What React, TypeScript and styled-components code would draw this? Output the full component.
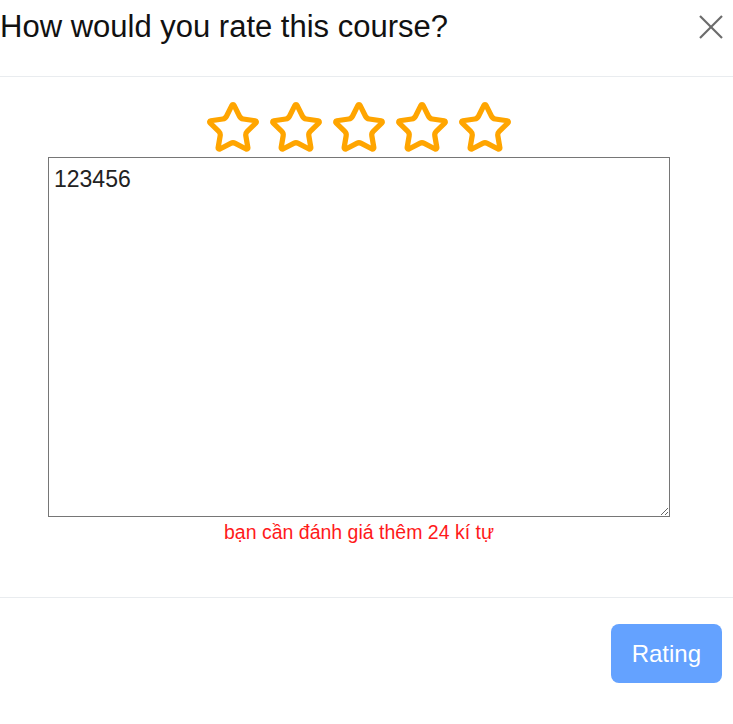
import React, { useState } from "react";
import styled, { createGlobalStyle } from "styled-components";

const GlobalStyle = createGlobalStyle`
  html, body {
    margin: 0;
    padding: 0;
    background: #ffffff;
    font-family: "Liberation Sans", Arial, sans-serif;
  }
  * { box-sizing: border-box; }
`;

const Modal = styled.div`
  width: 733px;
  height: 724px;
  background: #ffffff;
  display: flex;
  flex-direction: column;
`;

const Header = styled.div`
  height: 77px;
  border-bottom: 1px solid #e9ecef;
  display: flex;
  align-items: flex-start;
  justify-content: space-between;
  padding: 9px 10px 0 0;
`;

const Title = styled.h2`
  margin: 0;
  font-size: 31px;
  font-weight: 400;
  line-height: 36px;
  color: #111;
  font-family: "Liberation Sans", Arial, sans-serif;
`;

const CloseButton = styled.button`
  border: none;
  background: transparent;
  padding: 0;
  margin-top: 6px;
  width: 24px;
  height: 24px;
  cursor: pointer;
  svg { display: block; }
`;

const Body = styled.div`
  padding: 23px 63px 53px 48px;
  display: flex;
  flex-direction: column;
  align-items: center;
  border-bottom: 1px solid #e9ecef;
`;

const Stars = styled.div`
  display: flex;
  gap: 7px;
  height: 56px;
  margin-bottom: 1px;
`;

const StarButton = styled.span`
  display: block;
  cursor: pointer;
  svg { display: block; }
`;

const TextArea = styled.textarea`
  display: block;
  width: 622px;
  height: 360px;
  border: 1px solid #767676;
  border-radius: 0;
  padding: 8px 5px;
  font-family: "Liberation Sans", Arial, sans-serif;
  font-size: 23px;
  color: #222;
  resize: both;
  outline: none;
`;

const Hint = styled.div`
  margin-top: 4px;
  font-size: 19.5px;
  line-height: 23px;
  color: #ff1a1a;
  text-align: center;
`;

const Footer = styled.div`
  flex: 1;
  display: flex;
  justify-content: flex-end;
  align-items: flex-start;
  padding: 26px 11px 0 0;
`;

const RatingButton = styled.button<{ $disabled?: boolean }>`
  height: 59px;
  padding: 0 21px;
  border: none;
  border-radius: 8px;
  background: ${(p) => (p.$disabled ? "#64a2ff" : "#2f80ff")};
  color: #ffffff;
  font-family: "Liberation Sans", Arial, sans-serif;
  font-size: 24px;
  display: flex;
  align-items: center;
  justify-content: center;
`;

const STAR_PATH =
  "M11.525 2.295a.53.53 0 0 1 .95 0l2.31 4.679a2.123 2.123 0 0 0 1.595 1.16l5.166.756a.53.53 0 0 1 .294.904l-3.736 3.638a2.123 2.123 0 0 0-.611 1.878l.882 5.14a.53.53 0 0 1-.771.56l-4.618-2.428a2.122 2.122 0 0 0-1.973 0L6.396 21.01a.53.53 0 0 1-.77-.56l.881-5.139a2.122 2.122 0 0 0-.611-1.879L2.16 9.795a.53.53 0 0 1 .294-.906l5.165-.755a2.122 2.122 0 0 0 1.597-1.16z";

const Star: React.FC = () => (
  <svg width="56" height="56" viewBox="0 0 24 24" fill="#ffffff" stroke="#ffa500" strokeWidth="2.25" strokeLinejoin="round">
    <path d={STAR_PATH} />
  </svg>
);

export default function App() {
  const [text, setText] = useState("123456");
  const remaining = Math.max(0, 30 - text.length);
  return (
    <>
      <GlobalStyle />
      <Modal>
        <Header>
          <Title>How would you rate this course?</Title>
          <CloseButton aria-label="Close">
            <svg width="24" height="24" viewBox="0 0 24 24" stroke="#6b6b6b" strokeWidth="2.2" strokeLinecap="butt">
              <line x1="1" y1="1" x2="23" y2="23" />
              <line x1="23" y1="1" x2="1" y2="23" />
            </svg>
          </CloseButton>
        </Header>
        <Body>
          <Stars>
            {[0, 1, 2, 3, 4].map((i) => (
              <StarButton key={i}>
                <Star />
              </StarButton>
            ))}
          </Stars>
          <TextArea value={text} onChange={(e) => setText(e.target.value)} />
          <Hint>bạn cần đánh giá thêm {remaining} kí tự</Hint>
        </Body>
        <Footer>
          <RatingButton $disabled disabled>Rating</RatingButton>
        </Footer>
      </Modal>
    </>
  );
}
